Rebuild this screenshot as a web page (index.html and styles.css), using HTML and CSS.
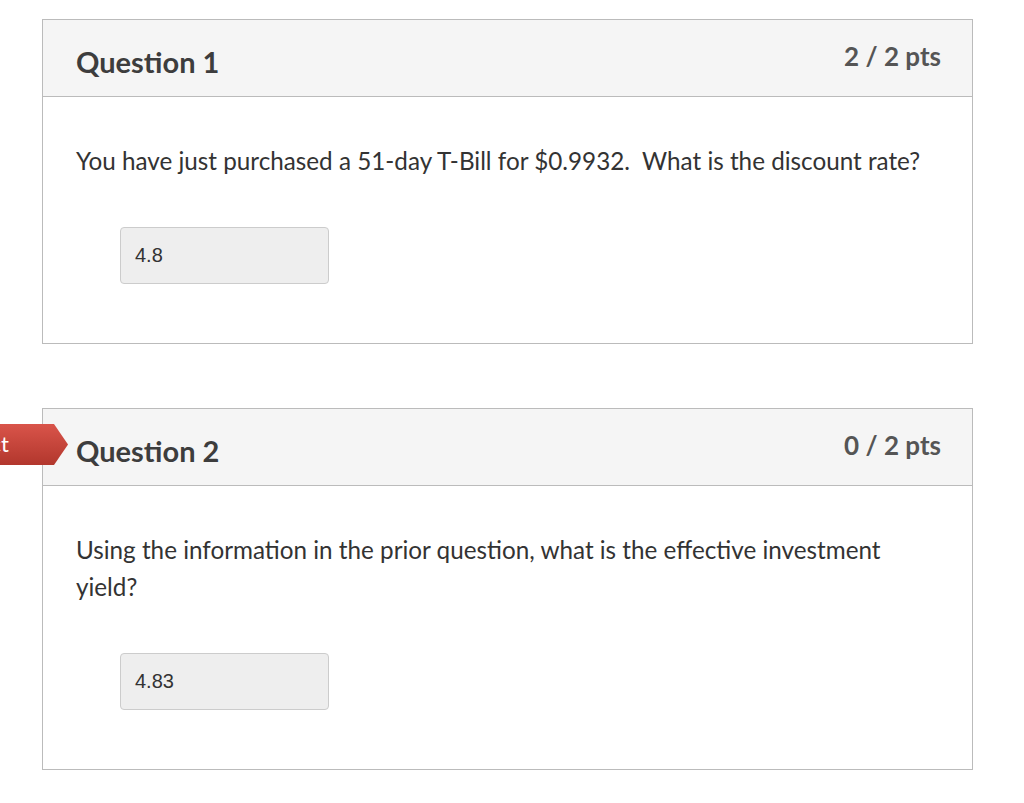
FILE: index.html
```html
<!DOCTYPE html>
<html lang="en">
<head>
    <meta charset="UTF-8">
    <title>Quiz Results</title>
    <link rel="stylesheet" href="styles.css">
</head>
<body>
    <div class="quiz">
        <!-- Question 1 -->
        <div class="question">
            <div class="question-header">
                <h2 class="question-title">Question 1</h2>
                <div class="question-points">2 / 2 pts</div>
            </div>
            <div class="question-body">
                <p class="question-text">You have just purchased a 51-day T-Bill for $0.9932.&nbsp; What is the discount rate?</p>
                <div class="answer-box">4.8</div>
            </div>
        </div>

        <!-- Question 2 -->
        <div class="question">
            <div class="question-header">
                <div class="answer-flag">Incorrect</div>
                <h2 class="question-title">Question 2</h2>
                <div class="question-points">0 / 2 pts</div>
            </div>
            <div class="question-body">
                <p class="question-text">Using the information in the prior question, what is the effective investment yield?</p>
                <div class="answer-box">4.83</div>
            </div>
        </div>
    </div>
</body>
</html>
```

FILE: styles.css
```css
* {
    margin: 0;
    padding: 0;
    box-sizing: border-box;
}

body {
    background-color: #fff;
    font-family: Lato, "Open Sans", sans-serif;
    color: #2d3b45;
    overflow-x: hidden;
}

.quiz {
    display: flex;
    flex-direction: column;
    gap: 64px;
    padding: 19px 0 0 42px;
    width: 973px;
}

.question {
    border: 1px solid #bbbbbb;
    background-color: #fff;
}

.question-header {
    position: relative;
    display: flex;
    justify-content: space-between;
    align-items: flex-start;
    height: 77px;
    padding: 0 31px 0 33px;
    background-color: #f5f5f5;
    border-bottom: 1px solid #bbbbbb;
}

.question-title {
    font-size: 29px;
    font-weight: 700;
    color: #3d3d3d;
    line-height: 32px;
    padding-top: 26px;
}

.question-points {
    font-size: 26px;
    font-weight: 700;
    color: #555;
    line-height: 30px;
    padding-top: 21px;
}

/* red "Incorrect" marker that sticks out on the left */
.answer-flag {
    position: absolute;
    left: -140px;
    top: 15px;
    width: 165px;
    height: 41px;
    padding-right: 59px;
    text-align: right;
    font-size: 22px;
    line-height: 40px;
    color: #fff;
    background: linear-gradient(#d9544a, #b2372d);
    clip-path: polygon(0 0, 151px 0, 165px 50%, 151px 100%, 0 100%);
}

.question-body {
    padding: 45px 32px 59px 33px;
}

.question-text {
    font-size: 24.25px;
    line-height: 37px;
    color: #333;
}

.answer-box {
    width: 209px;
    height: 57px;
    margin: 48px 0 0 44px;
    padding: 0 14px;
    background-color: #eeeeee;
    border: 1px solid #cccccc;
    border-radius: 4px;
    font-family: "Liberation Sans", Arial, sans-serif;
    font-size: 20px;
    line-height: 55px;
    color: #333;
}
```
